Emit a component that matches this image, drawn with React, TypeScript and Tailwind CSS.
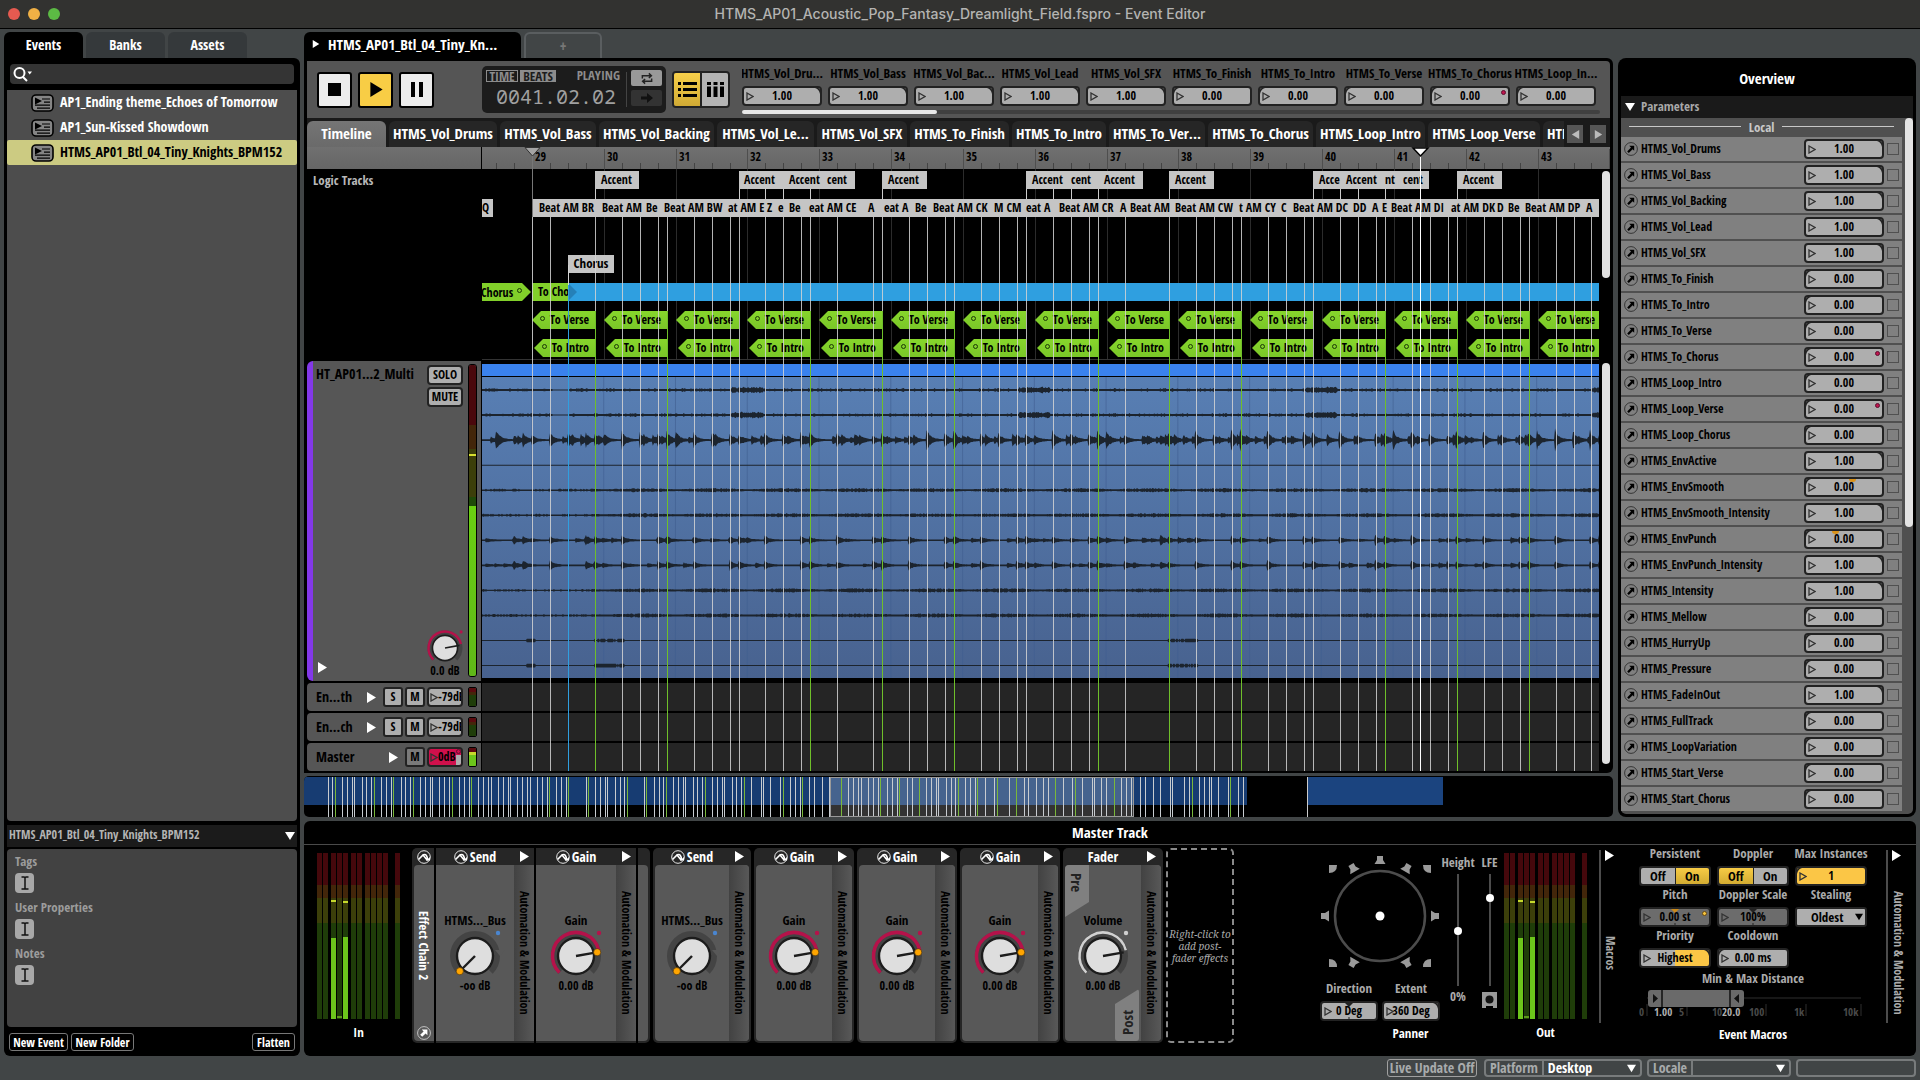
import type { ReactNode } from "react";

const BAR = 71.83;
const at = (bar: number) => 50 + BAR * bar;

const PARAMS: [string, string, string?][] = [
  ["HTMS_Vol_Drums", "1.00"], ["HTMS_Vol_Bass", "1.00"], ["HTMS_Vol_Backing", "1.00"], ["HTMS_Vol_Lead", "1.00"],
  ["HTMS_Vol_SFX", "1.00"], ["HTMS_To_Finish", "0.00"], ["HTMS_To_Intro", "0.00"], ["HTMS_To_Verse", "0.00"],
  ["HTMS_To_Chorus", "0.00", "red"], ["HTMS_Loop_Intro", "0.00"], ["HTMS_Loop_Verse", "0.00", "red"],
  ["HTMS_Loop_Chorus", "0.00"], ["HTMS_EnvActive", "1.00"], ["HTMS_EnvSmooth", "0.00", "mod"],
  ["HTMS_EnvSmooth_Intensity", "1.00"], ["HTMS_EnvPunch", "0.00", "modL"], ["HTMS_EnvPunch_Intensity", "1.00"],
  ["HTMS_Intensity", "1.00"], ["HTMS_Mellow", "0.00"], ["HTMS_HurryUp", "0.00"], ["HTMS_Pressure", "0.00"],
  ["HTMS_FadeInOut", "1.00"], ["HTMS_FullTrack", "0.00"], ["HTMS_LoopVariation", "0.00"],
  ["HTMS_Start_Verse", "0.00"], ["HTMS_Start_Chorus", "0.00"],
];

const TOP_PARAMS: [string, string, string?][] = [
  ["HTMS_Vol_Dru...", "1.00"], ["HTMS_Vol_Bass", "1.00"], ["HTMS_Vol_Bac...", "1.00"], ["HTMS_Vol_Lead", "1.00"],
  ["HTMS_Vol_SFX", "1.00"], ["HTMS_To_Finish", "0.00"], ["HTMS_To_Intro", "0.00"], ["HTMS_To_Verse", "0.00"],
  ["HTMS_To_Chorus", "0.00", "red"], ["HTMS_Loop_In...", "0.00"],
];

const SHEETS: [string, string][] = [
  ["HTMS_Vol_Drums", "w-[108px]"], ["HTMS_Vol_Bass", "w-[96px]"], ["HTMS_Vol_Backing", "w-[115px]"],
  ["HTMS_Vol_Le...", "w-[97px]"], ["HTMS_Vol_SFX", "w-[90px]"], ["HTMS_To_Finish", "w-[99px]"],
  ["HTMS_To_Intro", "w-[94px]"], ["HTMS_To_Ver...", "w-[96px]"], ["HTMS_To_Chorus", "w-[105px]"],
  ["HTMS_Loop_Intro", "w-[109px]"], ["HTMS_Loop_Verse", "w-[112px]"],
];

const BEATS = [
  0, 0.25, 0.875, 1.25, 1.5, 1.75, 1.875, 2.25, 2.5, 2.75, 2.875, 3.25, 3.5, 3.75, 3.875, 4.25, 4.75, 4.875,
  5.25, 5.5, 5.75, 5.875, 6.25, 6.5, 6.75, 6.875, 7.25, 7.5, 7.75, 7.875, 8.25, 8.875, 9.25, 9.5, 9.75, 9.875,
  10.25, 10.5, 10.75, 10.875, 11.25, 11.5, 11.75, 11.875, 12.25, 12.5, 12.75, 12.875, 13.25, 13.5, 13.75, 13.875,
  14.25, 14.5, 14.75,
];
const ACCENTS = [0.875, 2.875, 3.25, 3.5, 3.875, 4.875, 6.875, 7.25, 7.5, 7.875, 8.875, 10.875, 11.25, 11.5, 11.875, 12.875];

const BEAT_LABELS: [number, string][] = [
  [57, "Beat AM BR"], [120, "Beat AM"], [164, "Be"], [182, "Beat AM BW"], [246, "at AM E"], [285, "Z"], [296, "e"],
  [307, "Be"], [327, "eat AM CE"], [386, "A"], [402, "eat A"], [433, "Be"], [451, "Beat AM CK"], [512, "M CM"],
  [544, "eat A"], [577, "Beat AM CR"], [638, "A"], [648, "Beat AM"], [693, "Beat AM CW"], [757, "t AM CY"],
  [799, "C"], [811, "Beat AM DC"], [871, "DD"], [890, "A"], [900, "E"], [909, "Beat AM DI"], [969, "at AM DK"],
  [1015, "D"], [1026, "Be"], [1043, "Beat AM DP"], [1104, "A"],
];
const ACCENT_BOXES: [number, number][] = [[113, 44], [257, 116], [400, 45], [544, 117], [687, 45], [831, 116], [975, 45]];
const ACCENT_LABELS: [number, string][] = [
  [119, "Accent"], [262, "Accent"], [307, "Accent"], [345, "cent"], [406, "Accent"], [550, "Accent"], [589, "cent"],
  [622, "Accent"], [693, "Accent"], [837, "Acce"], [864, "Accent"], [903, "nt"], [921, "cent"], [981, "Accent"],
];

function Tri({ dir = "right", className = "" }: { dir?: "right" | "left" | "down"; className?: string }) {
  const d = dir === "right" ? "M1 0 L10 5.5 L1 11Z" : dir === "left" ? "M10 0 L1 5.5 L10 11Z" : "M0 1 L11 1 L5.5 10Z";
  return <svg viewBox="0 0 11 11" className={"shrink-0 fill-current " + className}><path d={d} /></svg>;
}

function Corner({ side }: { side: "l" | "r" }) {
  return (
    <svg viewBox="0 0 6 6" className={"absolute top-0 size-[6px] fill-[#222] " + (side === "r" ? "right-0" : "left-0")}>
      <path d={side === "r" ? "M1 0H6V6Q5 1 1 0Z" : "M5 0H0V6Q1 1 5 0Z"} />
    </svg>
  );
}

function Field({ label, value, mark, tone = "bg-[#aeaeae]", className = "w-20", centre = false }: {
  label: string; value: string; mark?: string; tone?: string; className?: string; centre?: boolean;
}) {
  const atStart = value === "0.00" || value === "1" || value === "0.00 ms";
  return (
    <span className={"relative flex h-5 shrink-0 items-center overflow-hidden rounded-[4px] border-2 border-[#222] text-black " + tone + " " + className}>
      {!centre && <Corner side={atStart ? "l" : "r"} />}
      {centre && (
        <svg viewBox="0 0 10 16" className="absolute inset-y-0 left-1/2 h-full w-[10px] -translate-x-1/2">
          <path d="M1 0H9L5 4Z" fill={mark === "pitch" ? "#c98a1c" : "#222"} /><path d="M5 14V16" stroke="#222" />
        </svg>
      )}
      <svg viewBox="0 0 8 9" className="absolute left-[2px] h-[9px] w-2"><path d="M1 1L7 4.5L1 8Z" fill="none" stroke="#333" strokeWidth="1.3" /></svg>
      <input aria-label={label} defaultValue={value} className="relative h-4 w-full bg-transparent text-center text-xs leading-4 font-bold outline-none" />
      {mark === "red" && <i className="absolute top-[2px] right-[2px] size-[5px] rounded-full border border-[#5c1030] bg-[#c0144c]" />}
      {mark === "mod" && <i className="absolute top-0 right-[26px] h-[3px] w-[7px] rounded-b-full bg-[#d9921a]" />}
      {mark === "modL" && <i className="absolute top-0 left-[26px] h-[3px] w-[7px] rounded-b-full bg-[#d9921a]" />}
      {mark === "pitch" && <i className="absolute top-[2px] right-[2px] size-[5px] rounded-full border border-[#6b4a10] bg-[#f8c63f]" />}
    </span>
  );
}

function polar(r: number, deg: number) {
  const a = (deg * Math.PI) / 180;
  return (30 + r * Math.cos(a)).toFixed(2) + " " + (30 + r * Math.sin(a)).toFixed(2);
}
const arc = (r: number, a: number, b: number) => "M" + polar(r, a) + "A" + r + " " + r + " 0 " + (b - a > 180 ? 1 : 0) + " 1 " + polar(r, b);

function Knob({ kind, className }: { kind: "send" | "gain" | "fader" | "track"; className: string }) {
  const angle = kind === "send" ? 135 : 350;
  return (
    <svg viewBox="0 0 60 60" className={"shrink-0 " + className}>
      <path d={arc(22, 135, 405)} fill="none" stroke="#444" strokeWidth="6" />
      {kind !== "send" && <path d={arc(23.5, 135, 346)} fill="none" stroke={kind === "fader" ? "#d0d0d0" : "#b5124a"} strokeWidth={kind === "fader" ? 2.5 : 3.5} />}
      {kind === "send" && <path d="M50 24L60 24L55 30Z" fill="#585858" />}
      <circle cx="30" cy="30" r="18" fill="#dedede" stroke="#1c1c1c" strokeWidth="2.4" />
      <path d={"M" + polar(0, angle) + "L" + polar(kind === "fader" || kind === "track" ? 21 : 18, angle)} stroke="#1c1c1c" strokeWidth="2.4" />
      {(kind === "gain" || kind === "send") && <circle cx={polar(21.5, angle).split(" ")[0]} cy={polar(21.5, angle).split(" ")[1]} r="3.6" fill="#ffa500" stroke="#3b2a10" strokeWidth="0.6" />}
      <circle cx="53" cy="7" r="2.2" fill={kind === "send" ? "#4a86d0" : kind === "fader" ? "#d0d0d0" : "#b5124a"} />
    </svg>
  );
}

function FxIcon() {
  return (
    <svg viewBox="0 0 14 14" className="size-[14px] shrink-0" fill="none" stroke="white">
      <circle cx="7" cy="7" r="6.3" strokeWidth="0.9" />
      <path d="M1.5 9.5L6 5L10.5 10.5M6 5C9 3.5 10.5 6 10.5 10" strokeWidth="1.6" /><path d="M9 10.5H13V7Z" fill="white" stroke="none" />
    </svg>
  );
}

function LinkIcon({ dark = false }: { dark?: boolean }) {
  return (
    <svg viewBox="0 0 14 14" className="size-[14px] shrink-0">
      <circle cx="7" cy="7" r="6.4" fill="none" stroke={dark ? "#222" : "#ddd"} strokeWidth="0.8" />
      <path d={dark ? "M5.2 3.8H10.2V8.8L8.6 7.2L4.8 11L3.2 9.4L7 5.4Z" : "M4.8 3.6H10.4V9.2L8.6 7.4L5.2 10.8L3.2 8.8L6.6 5.4Z"} fill={dark ? "#000" : "#fff"} />
    </svg>
  );
}

function EventIcon() {
  return (
    <svg viewBox="0 0 24 18" className="h-[18px] w-6 shrink-0">
      <rect x="1" y="1" width="21" height="16" rx="4" fill="#858585" stroke="#000" strokeWidth="1.6" />
      <path d="M4 3.5L11 7L4 10.5Z" /><path d="M11 5H19M13 8.2H19M4 11.2H19M6 14.2H19" stroke="#000" strokeWidth="1.2" />
    </svg>
  );
}

function Meters() {
  const bars = [0, 6, 14, 20, 26, 34, 40, 48, 54, 60, 66, 78];
  return (
    <svg viewBox="0 0 83 166" className="h-[166px] w-[83px]">
      {bars.map((x) => (
        <g key={x}>
          <rect x={x} y="0" width="5" height="32" fill="#45080c" />
          <rect x={x} y="32" width="5" height="13" fill="#43260a" />
          <rect x={x} y="45" width="5" height="25" fill="#3c3f0a" />
          <rect x={x} y="70" width="5" height="96" fill="#1f3d09" />
        </g>
      ))}
      <rect x="14" y="85" width="5" height="81" fill="#6cc51b" /><rect x="26" y="84" width="5" height="82" fill="#6cc51b" />
      <rect x="14" y="47" width="5" height="2" fill="#c5d92c" /><rect x="26" y="48" width="5" height="2" fill="#c5d92c" />
      <rect x="20" y="163" width="5" height="2" fill="#5d9a1c" />
    </svg>
  );
}

function MiniMeter({ lit = false }: { lit?: boolean }) {
  return (
    <span className="flex h-5 w-[9px] shrink-0 flex-col overflow-hidden rounded-[2px] border border-black">
      <i className="h-1 bg-[#5a0a0e]" />
      <i className={"h-[3px] " + (lit ? "bg-[#c5d92c]" : "bg-[#43260a]")} />
      <i className={"flex-1 " + (lit ? "bg-[#6cc51b]" : "bg-[#1f3d09]")} />
    </span>
  );
}

function rng(seed: number) {
  let s = seed;
  return () => ((s = (s * 16807) % 2147483647) / 2147483647);
}

/* Outline of one channel, mirrored around its centre line. */
function wave(cy: number, kind: number, seed: number) {
  const r = rng(seed * 7919 + 13);
  const top: string[] = [];
  const bottom: string[] = [];
  let env = 0;
  for (let x = 0; x <= 1118; x += 1) {
    const bar = (x - 50) / BAR;
    const part = ((bar % 1) + 1) % 1;
    let a = 0.5;
    if (kind === 0) {
      const swell = Math.abs(((bar + 12.1) % 4) - 3.1) < 0.22 && bar > 2;
      a = 1 + (r() > 0.75 ? r() : 0) + (swell ? 0.6 + r() * 1.4 : 0);
      if (x > 70 && x < 88) a = 0.5;
    }
    if (kind === 1) {
      const hit = [0.875, 0, 0.25, 0.5, 0.75].some((p) => Math.abs(part - p) < 0.007);
      if (hit) env = 5 + r() * 7;
      else if (x % 9 === 0 && r() > 0.5) env = 3 + r() * 4;
      env *= 0.78;
      a = 0.8 + env * (0.7 + r() * 0.5);
    }
    if (kind === 2) {
      const hit = [0.875, 0.25, 0.75].some((p) => Math.abs(part - p) < 0.007);
      if (hit) env = 4 + r() * 2;
      else if (x % 9 === 4 && r() > 0.65) env = 1.5 + r() * 2;
      env *= 0.8;
      a = 0.8 + env * (0.6 + r() * 0.5);
    }
    if (kind === 3) a = x < 110 ? (r() > 0.7 ? 1.4 : 0.7) : 0.9 + r() * 1.3 * Math.abs(Math.sin(bar * 3.1));
    if (kind === 4) {
      const b = (x - 113 + 574) % 574;
      a = (b < 30 && r() > 0.2) || (x > 44 && x < 54) ? 1.8 : 0.5;
    }
    top.push(x + " " + (cy - a).toFixed(1));
    bottom.push(x + " " + (cy + a).toFixed(1));
  }
  return "M" + top.join("L") + "L" + bottom.reverse().join("L") + "Z";
}
const ROWS = [0, 0, 1, 5, 3, 3, 2, 2, 3, 3, 4, 4];
const WAVES = ROWS.map((k, i) => wave(13 + i * 25.05, k, i + 3));

function Lane({ children }: { children?: ReactNode }) {
  return <div className="relative h-[18px] overflow-hidden">{children}</div>;
}

function Transition({ bar, text, inset }: { bar: number; text: string; inset: number }) {
  const left = Math.round(at(bar)) + inset;
  return (
    <div className="absolute top-0 flex h-[18px] items-center justify-between bg-gradient-to-b from-[#87d62c] to-[#7ac728] pr-1.5 pl-2 text-xs leading-[18px] text-black [clip-path:polygon(0_50%,9px_0,100%_0,100%_100%,9px_100%)]"
      style={{ left, width: 63 - inset }}>
      <span className="mb-1 size-[5px] rounded-full border border-[#1c3a06]" />{text}
    </div>
  );
}

function Volume({ label, hot = false }: { label: string; hot?: boolean }) {
  return (
    <span className={"relative flex h-5 w-9 shrink-0 items-center overflow-hidden rounded-[4px] border-2 border-[#222] " + (hot ? "bg-[#d0104c]" : "bg-[#aeaeae]")}>
      {hot && <i className="absolute right-0 bottom-0 h-2.5 w-[5px] bg-[#aeaeae]" />}
      <svg viewBox="0 0 8 9" className="ml-px h-[9px] w-2 shrink-0"><path d="M1 1L7 4.5L1 8Z" fill="none" stroke="#333" strokeWidth="1.3" /></svg>
      <input aria-label={label + " volume"} defaultValue={hot ? "0dB" : "-79dB"} className="relative h-4 w-8 min-w-0 bg-transparent text-xs leading-4 font-bold text-black outline-none" />
      {hot && <i className="absolute top-0 right-0 size-[5px] rounded-full border border-[#5c1030]" />}
    </span>
  );
}

function SmallRow({ name, solo, hot }: { name: string; solo: boolean; hot?: boolean }) {
  return (
    <div className="flex h-7">
      <div className="flex w-[174px] shrink-0 items-center rounded-l-[4px] bg-[#565656] pr-1 pl-[9px]">
        <span className="flex-1 text-sm text-black">{name}</span>
        <button aria-label={"Expand " + name} className="mr-1.5 text-white"><Tri className="size-[11px]" /></button>
        {solo && <button className="mr-0.5 h-5 w-5 rounded-[3px] border-2 border-[#222] bg-[#aeaeae] text-xs leading-4">S</button>}
        <button className={"mr-0.5 h-5 w-5 rounded-[3px] border-2 border-[#222] text-xs leading-4 " + (solo ? "bg-[#aeaeae]" : "bg-[#7a7a7a]")}>M</button>
        <Volume label={name} hot={hot} />
        <span className="w-[5px]" />
        <MiniMeter lit={hot} />
      </div>
      <div className="mr-[11px] ml-px flex-1 bg-[#252525]" />
    </div>
  );
}

function Strip() {
  return <div className="flex w-5 shrink-0 items-center justify-center bg-gradient-to-r from-[#424242] to-[#585858] text-xs leading-5 text-black [writing-mode:vertical-rl]">Automation &amp; Modulation</div>;
}

function Dial({ kind, label, value }: { kind: "send" | "gain" | "fader"; label: string; value: string }) {
  return (
    <>
      <span className="h-5 text-[13px] leading-[18px] text-black">{label}</span>
      <Knob kind={kind} className="-mt-[5px] -mb-2 size-[60px]" />
      <span className="text-xs leading-4 text-black">{value}</span>
    </>
  );
}

function Card({ title, kind, label, value, width, chained = false }: { title: string; kind: "send" | "gain"; label: string; value: string; width: string; chained?: boolean }) {
  return (
    <div className={"flex shrink-0 flex-col overflow-hidden bg-[#262626] " + width + (chained ? " pb-0.5" : " rounded-[5px] px-0.5 pb-0.5")}>
      <div className="flex h-[17px] shrink-0 items-center text-sm leading-4 text-white">
        <span className="flex flex-1 items-center justify-center gap-0.5"><FxIcon />{title}</span>
        <button aria-label={"Expand " + title} className="flex w-5 justify-center"><Tri className="size-[11px]" /></button>
      </div>
      <div className={"flex min-h-0 flex-1 overflow-hidden bg-[#585858] " + (chained ? "" : "rounded-[4px]")}>
        <div className="flex flex-1 flex-col items-center pt-[46px]"><Dial kind={kind} label={label} value={value} /></div>
        <Strip />
      </div>
    </div>
  );
}

function Speaker({ x, y, turn, corner = false }: { x: number; y: number; turn: number; corner?: boolean }) {
  return (
    <g transform={"translate(" + x + " " + y + ") rotate(" + turn + ")"} fill="#9a9a9a">
      {corner ? <path d="M-4 4V-4H4Q4 4 -4 4Z" /> : <path d="M-3 -4H3V0L5.5 4H-5.5L-3 0Z" />}
    </g>
  );
}

function Toggle({ on, label }: { on: boolean; label: string }) {
  const lit = "bg-gradient-to-b from-[#f7cb45] to-[#d3ac32]";
  return (
    <div role="group" aria-label={label} className="flex h-5 w-[72px] gap-px rounded-[3px] border-2 border-[#222] bg-[#222] text-[13px] leading-4 text-black">
      <button className={"flex-1 rounded-l-[2px] " + (on ? "bg-[#aeaeae]" : lit)}>Off</button>
      <button className={"flex-1 rounded-r-[2px] " + (on ? lit : "bg-[#aeaeae]")}>On</button>
    </div>
  );
}

function Cell({ label, children }: { label: string; children: ReactNode }) {
  return <div className="flex flex-col items-center"><span className="h-[21px] text-[13px] leading-4 whitespace-nowrap text-[#ababab]">{label}</span>{children}</div>;
}

function Slider({ label, top, children }: { label: string; top: string; children: ReactNode }) {
  return (
    <>
      <span className="leading-6">{label}</span>
      <span className="relative h-[112px] w-0.5 bg-[#4c4c4c]">
        <input type="range" aria-label={label} className="absolute inset-y-0 -left-1 w-2.5 opacity-0 [writing-mode:vertical-lr]" />
        <i className={"pointer-events-none absolute -left-[3px] size-2 rounded-full bg-white " + top} />
      </span>
      {children}
    </>
  );
}

const MINI_BAR = 19.47;
const MINI: { x: number; green: boolean }[] = [];
{
  const r = rng(4711);
  for (let bar = -27; bar < 21; bar += 1) {
    for (const part of [0.25, 0.5, 0.75, 0.875]) {
      const x = Math.round(539.5 + (bar + part) * MINI_BAR);
      if (x > 15 && x < 943 && (part === 0.875 || r() > 0.16)) MINI.push({ x, green: part === 0.875 && r() > 0.4 });
    }
  }
}

export default function App() {
  return (
    <div className="flex min-h-screen flex-col overflow-hidden bg-[#414546] font-['Open_Sans_Condensed','Open_Sans',sans-serif] text-[13px] font-bold text-black select-none">
      <header className="flex h-[29px] shrink-0 items-center border-b border-black bg-[#323230] px-2">
        <div className="flex w-[54px] gap-2">
          <button aria-label="Close" className="size-3 rounded-full bg-[#e65a50]" />
          <button aria-label="Minimise" className="size-3 rounded-full bg-[#f0b045]" />
          <button aria-label="Zoom" className="size-3 rounded-full bg-[#5cba44]" />
        </div>
        <h1 className="flex-1 pr-[54px] text-center font-['Inter',sans-serif] text-sm leading-5 font-medium text-[#b4b4b2]">HTMS_AP01_Acoustic_Pop_Fantasy_Dreamlight_Field.fspro - Event Editor</h1>
      </header>

      <main className="grid flex-1 grid-cols-[296px_minmax(0,1fr)] gap-x-1 px-1 pt-[3px]">
        <aside className="flex flex-col">
          <nav className="flex h-[26px] gap-[3px] text-sm leading-4 text-white">
            <button className="w-[79px] rounded-t-[6px] bg-black">Events</button>
            <button className="w-[79px] rounded-t-[6px] bg-[#35393b]">Banks</button>
            <button className="w-[79px] rounded-t-[6px] bg-[#35393b]">Assets</button>
          </nav>
          <div className="flex flex-1 flex-col rounded-[6px] rounded-tl-none bg-black px-[3px] pt-1.5 pb-[5px]">
            <div className="mx-[3px] flex h-5 items-center rounded-[4px] bg-[#343434] pl-[3px]">
              <svg viewBox="0 0 20 16" className="h-4 w-5 shrink-0" fill="none" stroke="white" strokeWidth="2">
                <circle cx="6.5" cy="7" r="5" /><path d="M10 11L14 15" /><path d="M14.5 5.5H19L16.7 8.5Z" fill="white" stroke="none" />
              </svg>
              <input aria-label="Search events" className="min-w-0 flex-1 bg-transparent text-white outline-none" />
            </div>
            <ul className="mt-1.5 flex-1 rounded-b-[4px] bg-[#4d4d4d] text-sm leading-5 text-white">
              {["AP1_Ending theme_Echoes of Tomorrow", "AP1_Sun-Kissed Showdown", "HTMS_AP01_Btl_04_Tiny_Knights_BPM152"].map((t, i) => (
                <li key={t} className={"flex h-[25px] items-center gap-[5px] pl-6 whitespace-nowrap " + (i === 2 ? "rounded-[2px] bg-[#cccb82] text-black" : "")}><EventIcon /><span className="pb-0.5">{t}</span></li>
              ))}
            </ul>
            <div className="mt-1 flex h-[22px] items-center justify-between bg-[#1b1b1b] px-0.5 text-[13px] leading-5 text-[#b4b4b4]">
              <span className="pb-0.5 text-xs">HTMS_AP01_Btl_04_Tiny_Knights_BPM152</span>
              <button aria-label="Collapse properties" className="text-white"><Tri dir="down" className="size-[10px]" /></button>
            </div>
            <div className="mt-0.5 flex h-[178px] flex-col rounded-[4px] bg-[#424242] pt-[3px] pl-2 text-[13px] text-[#9c9c9c]">
              {["Tags", "User Properties", "Notes"].map((t) => (
                <div key={t} className="h-[46px]">
                  <div className="h-[21px] leading-[18px]">{t}</div>
                  <button aria-label={"Edit " + t} className="flex h-5 w-[19px] items-center justify-center rounded-[4px] bg-[#a8a8a8]">
                    <svg viewBox="0 0 10 14" className="h-[14px] w-[10px]" fill="none" stroke="#111" strokeWidth="1.5"><path d="M1.5 1H4Q5 1 5 2Q5 1 6 1H8.5M5 2V12M1.5 13H4Q5 13 5 12Q5 13 6 13H8.5" /></svg>
                  </button>
                </div>
              ))}
            </div>
            <div className="mt-1.5 flex h-[18px] gap-[3px] px-0.5 text-xs leading-[15px] text-white">
              <button className="w-[59px] rounded-[3px] border border-[#777]">New Event</button>
              <button className="w-[63px] rounded-[3px] border border-[#777]">New Folder</button>
              <button className="ml-auto w-[43px] rounded-[3px] border border-[#777]">Flatten</button>
            </div>
          </div>
        </aside>

        <div className="flex min-w-0 flex-col gap-1">
          <div className="grid flex-1 grid-cols-[minmax(0,1fr)_298px] gap-x-[5px]">
            <section className="flex min-w-0 flex-col">
              <nav className="flex h-[26px] gap-[3px] text-[15px] leading-5 text-white">
                <button className="flex w-[217px] items-center gap-2 rounded-t-[6px] bg-black pb-0.5 pl-2"><Tri className="size-2" />HTMS_AP01_Btl_04_Tiny_Kn...</button>
                <button className="w-[78px] rounded-t-[6px] border-2 border-b-0 border-[#5a5e60] text-base leading-6 text-[#777]">+</button>
              </nav>
              <div className="flex flex-1 flex-col rounded-r-[6px] bg-black px-[3px] pt-[3px] pb-0.5">
                <div className="flex h-[57px] shrink-0 items-center rounded-tr-[4px] bg-[#555]">
                  <div className="ml-[10px] flex gap-[6px]">
                    <button aria-label="Stop" className="flex h-9 w-[35px] items-center justify-center rounded-[3px] border-2 border-black bg-[#ececec]"><i className="size-[13px] bg-black" /></button>
                    <button aria-label="Play" className="flex h-9 w-[35px] items-center justify-center rounded-[3px] border-2 border-black bg-[#f8cd45]"><Tri className="ml-0.5 size-[15px]" /></button>
                    <button aria-label="Pause" className="flex h-9 w-[35px] items-center justify-center gap-1 rounded-[3px] border-2 border-black bg-[#ececec]"><i className="h-[15px] w-1 bg-black" /><i className="h-[15px] w-1 bg-black" /></button>
                  </div>
                  <div className="ml-12 flex h-[47px] w-[184px] rounded-[5px] bg-[#1c1c1c] p-1">
                    <div className="flex flex-1 flex-col">
                      <div className="flex h-3 items-center text-[13px] leading-[9px] text-[#8c8c8c]">
                        <button className="h-3 w-8 border border-[#8c8c8c]">TIME</button>
                        <button className="ml-0.5 h-3 w-9 bg-[#8c8c8c] text-[#1c1c1c]">BEATS</button>
                        <span className="ml-auto pr-1.5 pb-0.5">PLAYING</span>
                      </div>
                      <div className="mt-[3px] text-center font-['Noto_Sans_Mono',monospace] text-xl leading-6 font-normal text-[#a0a0a0]">0041.02.02</div>
                    </div>
                    <div className="my-0.5 mr-1 w-px bg-[#444]" />
                    <div className="flex w-[31px] flex-col gap-1">
                      <button aria-label="Loop playback" className="flex h-4 items-center justify-center rounded-[2px] bg-[#999]">
                        <svg viewBox="0 0 16 14" className="h-[13px] w-4" fill="none" stroke="#222" strokeWidth="1.6"><path d="M3 7V4H12M10 1.5L12.7 4L10 6.5M13 7V10H4M6 7.5L3.3 10L6 12.5" /></svg>
                      </button>
                      <button aria-label="Follow" className="flex h-4 items-center justify-center rounded-[2px] bg-[#333]">
                        <svg viewBox="0 0 14 10" className="h-[10px] w-[14px] fill-[#111]"><path d="M1 3.5H7V0L13 5L7 10V6.5H1Z" /></svg>
                      </button>
                    </div>
                  </div>
                  <div className="ml-1.5 flex h-[37px] w-[58px] overflow-hidden rounded-[4px] border-2 border-[#222]">
                    <button aria-label="List view" className="flex flex-1 items-center justify-center bg-gradient-to-b from-[#f8d04a] to-[#d0aa34]">
                      <svg viewBox="0 0 19 15" className="h-[15px] w-[19px]"><path d="M0 0h3v3H0zM5 0h14v3H5zM0 6h3v3H0zM5 6h14v3H5zM0 12h3v3H0zM5 12h14v3H5z" /></svg>
                    </button>
                    <button aria-label="Column view" className="flex flex-1 items-center justify-center border-l-2 border-[#222] bg-[#b4b4b4]">
                      <svg viewBox="0 0 17 15" className="h-[15px] w-[17px]"><path d="M0 0h4v3H0zM6.5 0h4v3h-4zM13 0h4v3h-4zM0 4.5h4v10.5H0zM6.5 4.5h4v10.5h-4zM13 4.5h4v10.5h-4z" /></svg>
                    </button>
                  </div>
                  <div className="ml-3 flex min-w-0 flex-1 flex-col pr-2.5">
                    <div className="flex gap-[6px] overflow-hidden">
                      {TOP_PARAMS.map(([n, v, m]) => (
                        <label key={n} className="flex w-20 shrink-0 flex-col items-center text-[13px] leading-4 whitespace-nowrap text-black">{n}<span className="h-[5px]" /><Field label={n} value={v} mark={m} /></label>
                      ))}
                    </div>
                    <div className="mt-1 h-1 rounded-full bg-[#404040]"><div className="h-1 w-[195px] rounded-full bg-[#e8e8e8]" /></div>
                  </div>
                </div>

                <nav className="flex h-[29px] shrink-0 items-end overflow-hidden bg-[#1a1a1a] text-[15px] leading-5 whitespace-nowrap text-white">
                  <button className="mr-[3px] h-[26px] w-[79px] shrink-0 rounded-t-[6px] bg-gradient-to-b from-[#757575] to-[#6a6a6a] pb-0.5">Timeline</button>
                  {SHEETS.map(([t, w]) => <button key={t} className={"mr-[3px] h-[26px] shrink-0 rounded-t-[6px] bg-[#262626] pb-0.5 " + w}>{t}</button>)}
                  <button className="h-[26px] w-[21px] shrink-0 overflow-hidden rounded-tl-[6px] bg-[#262626] pb-0.5 pl-1 text-left">HTMS</button>
                  <span className="mb-1 ml-auto flex gap-[7px] pr-1 text-[#bbb]">
                    <button aria-label="Previous sheet" className="flex h-[18px] w-4 items-center justify-center bg-[#555]"><Tri dir="left" className="size-[9px]" /></button>
                    <button aria-label="Next sheet" className="flex h-[18px] w-4 items-center justify-center bg-[#555]"><Tri className="size-[9px]" /></button>
                  </span>
                </nav>

                <div className="relative flex flex-1 flex-col overflow-hidden">
                  <div className="flex h-[22px] shrink-0 bg-gradient-to-b from-[#707070] to-[#666]">
                    <div className="w-[175px] shrink-0 border-r border-black" />
                    <div className="relative flex-1 overflow-hidden text-xs leading-5">
                      <svg className="absolute inset-0 h-full w-full" shapeRendering="crispEdges">
                        {Array.from({ length: 64 }, (_, i) => {
                          const x = Math.round(at(i / 4 - 0.5));
                          return (i - 2) % 4 === 0 ? <path key={i} d={"M" + x + ".5 2V22"} stroke="#4e4e4e" /> : <path key={i} d={"M" + x + ".5 16V22"} stroke="#444" />;
                        })}
                      </svg>
                      {Array.from({ length: 15 }, (_, i) => <span key={i} className="absolute top-0" style={{ left: Math.round(at(i)) + 3 }}>{29 + i}</span>)}
                    </div>
                  </div>

                  <div className="flex h-[191px] shrink-0">
                    <div className="w-[175px] shrink-0 pt-px pl-1.5 text-[13px] leading-5 text-[#b8b8b8]">Logic Tracks</div>
                    <div className="relative mr-[11px] flex-1 overflow-hidden border-b border-[#333] pt-0.5 text-xs leading-[17px] whitespace-nowrap">
                      <svg className="absolute inset-0 h-full w-full" shapeRendering="crispEdges">
                        {Array.from({ length: 15 }, (_, i) => <path key={i} d={"M" + Math.round(at(i)) + ".5 0V191"} stroke="#2b2b2b" />)}
                        {ACCENTS.map((b) => <path key={b} d={"M" + Math.round(at(b)) + ".5 20V32"} stroke="#ccc" />)}
                      </svg>
                      <Lane>
                        {ACCENT_BOXES.map(([x, w]) => <i key={x} className="absolute top-0 h-[18px] bg-[#c5c5c5]" style={{ left: x, width: w }} />)}
                        {ACCENT_LABELS.map(([x, t]) => <span key={x} className="absolute top-0" style={{ left: x }}>{t}</span>)}
                      </Lane>
                      <div className="h-2.5" />
                      <Lane>
                        <i className="absolute top-0 left-0 h-[18px] w-[11px] bg-[#c5c5c5]" /><span className="absolute top-0 left-0">Q</span>
                        <i className="absolute top-0 right-0 left-[50px] h-[18px] bg-[#c5c5c5]" />
                        {BEAT_LABELS.map(([x, t]) => <span key={x} className="absolute top-0" style={{ left: x }}>{t}</span>)}
                      </Lane>
                      <div className="h-[38px]" />
                      <Lane><span className="absolute left-[86px] h-[18px] w-[46px] bg-[#c5c5c5] text-center text-[13px]">Chorus</span></Lane>
                      <div className="h-2.5" />
                      <Lane>
                        <div className="absolute left-0 flex h-[18px] w-[50px] items-center bg-[#82d02a] [clip-path:polygon(0_0,40px_0,49px_50%,40px_100%,0_100%)]"><span className="-ml-px">Chorus</span><span className="mb-1 ml-1 size-[5px] rounded-full border border-[#1c3a06]" /></div>
                        <div className="absolute left-[50px] h-[18px] w-9 overflow-hidden bg-[#82d02a] pl-1.5">To Cho</div>
                        <div className="absolute right-0 left-[86px] h-[18px] bg-[#2f9fe0]" />
                        <div className="absolute left-[86px] h-[18px] w-[9px] bg-[#2580b8] [clip-path:polygon(0_0,100%_50%,0_100%)]" />
                      </Lane>
                      <div className="h-2.5" />
                      <Lane>{Array.from({ length: 15 }, (_, i) => <Transition key={i} bar={i} text="To Verse" inset={0} />)}</Lane>
                      <div className="h-2.5" />
                      <Lane>{Array.from({ length: 15 }, (_, i) => <Transition key={i} bar={i} text="To Intro" inset={2} />)}</Lane>
                    </div>
                  </div>

                  <div className="flex flex-1 pt-px">
                    <div className="flex w-[174px] shrink-0 rounded-l-[6px] border-l-[6px] border-[#8338e8] bg-[#565656] pt-[3px] pr-1 pb-0.5 pl-[3px]">
                      <div className="flex flex-1 flex-col justify-between text-sm">
                        HT_AP01...2_Multi
                        <button aria-label="Expand HT_AP01" className="mb-1.5 ml-px text-white"><Tri className="size-[11px]" /></button>
                      </div>
                      <div className="flex w-9 flex-col items-center pt-px">
                        <button className="mb-0.5 h-5 w-9 rounded-[4px] border-2 border-[#222] bg-[#aeaeae] text-xs leading-4">SOLO</button>
                        <button className="h-5 w-9 rounded-[4px] border-2 border-[#222] bg-[#aeaeae] text-xs leading-4">MUTE</button>
                        <span className="flex-1" />
                        <Knob kind="track" className="-mb-[6px] size-[42px]" />
                        <span className="text-xs leading-4">0.0 dB</span>
                      </div>
                      <div className="mb-0.5 ml-[5px] flex w-[9px] flex-col overflow-hidden rounded-[3px] border border-black">
                        <i className="h-[60px] bg-[#4a080c]" /><i className="h-6 bg-[#43260a]" /><i className="h-[5px] bg-[#3c3f0a]" />
                        <i className="h-0.5 bg-[#d6e030]" /><i className="h-[41px] bg-[#3c3f0a]" /><i className="h-[9px] bg-[#1f4a09]" />
                        <i className="flex-1 bg-gradient-to-b from-[#6ad012] to-[#60b818]" />
                      </div>
                    </div>
                    <div className="mr-[11px] ml-px flex flex-1 flex-col overflow-hidden bg-black py-[3px]">
                      <div className="h-3 shrink-0 bg-[#3a82ee]" />
                      <svg viewBox="0 0 1118 301" preserveAspectRatio="none" className="mt-px h-0 min-h-[296px] w-full flex-1">
                        <defs><linearGradient id="clip" x1="0" y1="0" x2="0" y2="1"><stop offset="0" stopColor="#587fb4" /><stop offset="1" stopColor="#48628f" /></linearGradient></defs>
                        <rect width="1118" height="301" fill="url(#clip)" />
                        {Array.from({ length: 15 }, (_, i) => <path key={i} d={"M" + at(i) + " 0V301"} stroke="#3f5e90" strokeOpacity="0.6" />)}
                        {WAVES.map((d, i) => <path key={i} d={d} fill="#1c242e" />)}
                      </svg>
                    </div>
                  </div>
                  <div className="mt-0.5 flex flex-col gap-0.5">
                    <SmallRow name="En...th" solo />
                    <SmallRow name="En...ch" solo />
                    <SmallRow name="Master" solo={false} hot />
                  </div>

                  <svg className="pointer-events-none absolute right-[11px] bottom-0 left-[175px] h-[calc(100%-70px)] w-[calc(100%-186px)]" shapeRendering="crispEdges">
                    {BEATS.map((b) => <path key={b} d={"M" + Math.round(at(b)) + ".5 0V900"} stroke="#d4d4d4" strokeOpacity="0.85" />)}
                    {Array.from({ length: 15 }, (_, i) => i).filter((i) => ![2, 6, 10].includes(i)).map((i) => <path key={i} d={"M" + Math.round(at(i + 0.875)) + ".5 94V900"} stroke="#6fbf2a" />)}
                    <path d="M86.5 48V68" stroke="#d4d4d4" /><path d="M86.5 68V900" stroke="#2f9fe0" />
                  </svg>
                  <svg className="pointer-events-none absolute inset-y-0 left-[175px] h-full w-[calc(100%-186px)]">
                    <path d="M50.5 8V70" stroke="#777" /><path d="M43 0.5H58L50.5 9Z" fill="#a4a4a4" stroke="#333" />
                    <path d="M938.5 8V900" stroke="#fff" /><path d="M931 1H946L938.5 9Z" fill="#fff" stroke="#000" strokeWidth="1.5" />
                  </svg>
                  <i className="absolute top-[24px] right-0 h-[107px] w-2 rounded-full bg-[#e0e0e0]" />
                  <i className="absolute top-[216px] right-0 bottom-[7px] w-2 rounded-full bg-[#e0e0e0]" />
                </div>
              </div>

              <div className="mt-[3px] h-[41px] shrink-0 overflow-hidden rounded-[5px] bg-black">
                <svg className="h-full w-full" shapeRendering="crispEdges">
                  <rect x="0" y="1" width="943" height="28" fill="#173c72" />
                  <rect x="526" y="1" width="303" height="40" fill="#fff" fillOpacity="0.2" />
                  {MINI.map((m) => <path key={m.x} d={"M" + m.x + ".5 1V41"} stroke={m.green ? "#7ab83a" : "#c8ccd0"} />)}
                  <rect x="526" y="1" width="303" height="39" fill="none" stroke="#999" />
                  <rect x="1003" y="1" width="136" height="28" fill="#1b447f" /><path d="M1003.5 1V41" stroke="#ccc" />
                </svg>
              </div>
            </section>

            <aside className="mt-[26px] flex flex-col overflow-hidden rounded-[8px] bg-black p-[3px]">
              <h2 className="h-[35px] text-center text-[15px] leading-[34px] text-white">Overview</h2>
              <div className="flex h-[22px] items-center gap-1.5 bg-[#1a1a1a] pl-1 text-[13px] leading-5 text-[#a8a8a8]"><button aria-label="Collapse parameters" className="text-white"><Tri dir="down" className="size-[10px]" /></button><span className="pb-0.5">Parameters</span></div>
              <div className="flex flex-1 rounded-b-[5px] bg-[#505050]">
                <div className="flex-1">
                  <div className="flex h-[19px] items-center gap-2 px-2 pb-0.5 text-[13px] leading-4 text-[#c8c8c8]"><i className="h-px flex-1 bg-[#c8c8c8]" />Local<i className="h-px flex-1 bg-[#c8c8c8]" /></div>
                  <ul className="flex flex-col gap-0.5">
                    {PARAMS.map(([n, v, m]) => (
                      <li key={n} className="flex h-6 items-center bg-[#808080] px-[3px] text-xs leading-4">
                        <LinkIcon dark />
                        <span className="ml-[3px] flex-1">{n}</span>
                        <Field label={n} value={v} mark={m} />
                        <input type="checkbox" aria-label={"Hold " + n} className="ml-[3px] size-3 appearance-none border border-[#505050]" />
                      </li>
                    ))}
                  </ul>
                </div>
                <div className="w-[11px] shrink-0 pl-[3px]"><i className="block h-[409px] w-2 rounded-full bg-[#e4e4e4]" /></div>
              </div>
            </aside>
          </div>

          <section className="flex h-[235px] shrink-0 flex-col rounded-[6px] bg-black">
            <h2 className="h-6 shrink-0 border-b border-[#4a4a4a] text-center text-[15px] leading-[22px] text-white">Master Track</h2>
            <div className="flex min-h-0 flex-1">
              <div className="ml-[13px] flex w-[83px] shrink-0 flex-col items-center gap-[3px] pt-2 text-[13px] leading-5 text-white"><Meters />In</div>
              <div className="mt-[3px] ml-3 flex h-[195px] flex-1">
                <div className="flex w-[238px] shrink-0 overflow-hidden rounded-[5px] bg-[#262626]">
                  <div className="flex w-[22px] shrink-0 flex-col items-center pb-0.5 pl-0.5 text-white">
                    <div className="flex h-[17px] shrink-0 items-center"><FxIcon /></div>
                    <div className="flex w-5 flex-1 flex-col items-center rounded-l-[4px] bg-[#585858] pb-px">
                      <span className="flex flex-1 items-center justify-center text-[13px] leading-5 [writing-mode:vertical-rl]">Effect Chain 2</span>
                      <LinkIcon />
                    </div>
                  </div>
                  <Card chained title="Send" kind="send" label="HTMS..._Bus" value="-oo dB" width="w-[100px] border-l-2 border-black" />
                  <Card chained title="Gain" kind="gain" label="Gain" value="0.00 dB" width="w-[104px] border-x-2 border-black" />
                  <div className="mt-[17px] mr-0.5 mb-0.5 flex-1 rounded-r-[4px] bg-[#585858]" />
                </div>
                <div className="ml-[3px] flex gap-[3px]">
                  <Card title="Send" kind="send" label="HTMS..._Bus" value="-oo dB" width="w-[98px]" />
                  <Card title="Gain" kind="gain" label="Gain" value="0.00 dB" width="w-[100px]" />
                  <Card title="Gain" kind="gain" label="Gain" value="0.00 dB" width="w-[100px]" />
                  <Card title="Gain" kind="gain" label="Gain" value="0.00 dB" width="w-[100px]" />
                  <div className="flex w-[100px] flex-col overflow-hidden rounded-[5px] bg-[#262626] px-0.5 pb-0.5">
                    <div className="flex h-[17px] items-center text-sm leading-4 text-white"><span className="flex-1 text-center">Fader</span><button aria-label="Expand Fader" className="flex w-5 justify-center"><Tri className="size-[11px]" /></button></div>
                    <div className="flex flex-1 overflow-hidden rounded-[4px] bg-[#585858]">
                      <div className="relative flex flex-1 flex-col items-center pt-[46px] text-black">
                        <span className="absolute top-0 left-0 h-[52px] w-6 bg-[#808080] pt-2 text-[15px] leading-6 text-[#222] [clip-path:polygon(0_0,100%_0,100%_37px,0_100%)] [writing-mode:vertical-rl]">Pre</span>
                        <Dial kind="fader" label="Volume" value="0.00 dB" />
                        <span className="absolute right-0.5 bottom-0 h-[52px] w-6 rotate-180 rounded-[3px] bg-[#808080] pt-1.5 text-[15px] leading-6 text-[#222] [clip-path:polygon(0_0,100%_0,100%_37px,0_100%)] [writing-mode:vertical-rl]">Post</span>
                      </div>
                      <Strip />
                    </div>
                  </div>
                  <div className="flex w-[68px] items-center justify-center rounded-[5px] border-2 border-dashed border-[#8a8a8a] text-center font-['Noto_Serif','Liberation_Serif',serif] text-[10px] leading-3 font-normal text-[#a8a8a8] italic">Right-click to<br />add post-<br />fader effects</div>
                </div>
              </div>

              <div className="flex shrink-0 pt-[5px]">
                <div className="flex flex-col items-center">
                  <svg viewBox="0 0 120 124" className="mt-0.5 h-[124px] w-[120px]">
                    <circle cx="60" cy="64" r="45" fill="none" stroke="#4c4c4c" strokeWidth="2.5" />
                    <circle cx="60" cy="64" r="4.5" fill="#fff" />
                    <Speaker x={60} y={8} turn={0} /><Speaker x={33} y={16} turn={-30} /><Speaker x={87} y={16} turn={30} />
                    <Speaker x={5} y={64} turn={-90} /><Speaker x={115} y={64} turn={90} />
                    <Speaker x={33} y={111} turn={-150} /><Speaker x={87} y={111} turn={150} />
                    <Speaker corner x={13} y={17} turn={0} /><Speaker corner x={107} y={17} turn={90} />
                    <Speaker corner x={107} y={111} turn={180} /><Speaker corner x={13} y={111} turn={270} />
                  </svg>
                  <div className="mt-1 flex gap-1 text-[13px]">
                    <Cell label="Direction"><Field label="Direction" value="0 Deg" centre className="w-[58px]" /></Cell>
                    <Cell label="Extent"><Field label="Extent" value="360 Deg" className="w-[58px]" /></Cell>
                  </div>
                  <span className="mt-1 pl-[61px] text-[13px] leading-4 text-white">Panner</span>
                </div>
                <div className="flex w-9 flex-col items-center text-[13px] leading-5 text-[#ababab]">
                  <Slider label="Height" top="top-[53px]"><span>0%</span></Slider>
                </div>
                <div className="flex w-[27px] flex-col items-center text-[13px] leading-5 text-[#ababab]">
                  <Slider label="LFE" top="top-[20px]">
                    <svg viewBox="0 0 15 16" className="mt-1.5 h-4 w-[15px]"><path d="M0 0H15V16H11V14H4V16H0Z" fill="#999" /><circle cx="7.5" cy="7.5" r="4" fill="#111" /></svg>
                  </Slider>
                </div>
              </div>
              <div className="ml-px flex w-[83px] shrink-0 flex-col items-center gap-[3px] pt-2 text-[13px] leading-5 text-white"><Meters />Out</div>
              <div className="mt-[5px] ml-3 flex h-[173px] w-[27px] shrink-0 flex-col border-l-2 border-[#4c4c4c] pl-[3px] text-white">
                <button aria-label="Expand macros"><Tri className="size-[11px]" /></button>
                <span className="mt-[75px] w-[12px] text-xs leading-3 text-[#ababab] [writing-mode:vertical-rl]">Macros</span>
              </div>
              <div className="ml-[13px] flex w-[228px] shrink-0 flex-col">
                <div className="grid grid-cols-3 gap-x-1.5">
                  <Cell label="Persistent"><Toggle on label="Persistent" /></Cell>
                  <Cell label="Doppler"><Toggle on={false} label="Doppler" /></Cell>
                  <Cell label="Max Instances"><Field label="Max Instances" value="1" tone="bg-[#fbc646]" className="w-[72px]" /></Cell>
                  <Cell label="Pitch"><Field label="Pitch" value="0.00 st" centre mark="pitch" tone="bg-[#6c6c6c]" className="w-[72px]" /></Cell>
                  <Cell label="Doppler Scale"><Field label="Doppler Scale" value="100%" centre tone="bg-[#6c6c6c]" className="w-[72px]" /></Cell>
                  <Cell label="Stealing">
                    <span className="relative flex h-5 w-[72px] items-center rounded-[3px] border-2 border-[#222] bg-[#aeaeae]">
                      <select aria-label="Stealing" className="h-4 w-full appearance-none bg-transparent pl-3.5 text-[13px] leading-4 outline-none"><option>Oldest</option></select>
                      <Tri dir="down" className="pointer-events-none absolute right-0.5 size-2" />
                    </span>
                  </Cell>
                  <Cell label="Priority"><Field label="Priority" value="Highest" tone="bg-gradient-to-r from-[#aeaeae] from-50% to-[#fbc646] to-50%" className="w-[72px]" /></Cell>
                  <Cell label="Cooldown"><Field label="Cooldown" value="0.00 ms" className="w-[72px]" /></Cell>
                </div>
                <div className="text-center text-[13px] leading-5 text-[#ababab]">Min &amp; Max Distance</div>
                <svg viewBox="0 0 228 38" className="h-[38px] w-[228px]" fontSize="11">
                  <path d="M8 10H222M8 16V28M48 16V28M127 16V28M167 16V28M222 16V28" stroke="#2e2e2e" fill="none" />
                  <rect x="9" y="2" width="96" height="17" rx="3" fill="#6a6a6a" /><path d="M23 2V19M91 2V19" stroke="#111" strokeWidth="1.5" />
                  <path d="M14 6L19 10.5L14 15ZM100 6L95 10.5L100 15Z" fill="#111" />
                  <g fill="#4a4a4a"><text x="0" y="28">0</text><text x="40" y="28">5</text><text x="73" y="28">10</text><text x="110" y="28">100</text><text x="155" y="28">1k</text><text x="204" y="28">10k</text></g>
                  <g fill="#b0b0b0"><text x="15" y="28">1.00</text><text x="83" y="28">20.0</text></g>
                </svg>
                <div className="text-center text-[13px] leading-4 text-white">Event Macros</div>
              </div>
              <div className="mt-[5px] ml-[19px] flex h-[173px] w-[30px] shrink-0 flex-col border-l-2 border-[#4c4c4c] pl-[3px] text-white">
                <button aria-label="Expand automation"><Tri className="size-[11px]" /></button>
                <span className="mt-[30px] w-[14px] text-xs leading-[14px] whitespace-nowrap text-[#ababab] [writing-mode:vertical-rl]">Automation &amp; Modulation</span>
              </div>
            </div>
          </section>
        </div>
      </main>

      <footer className="flex h-6 shrink-0 items-center justify-end gap-[5px] pr-1 text-sm leading-4 text-[#a8abac]">
        <button className="mr-0.5 h-[18px] w-[90px] rounded-[3px] border border-[#a0a0a0]">Live Update Off</button>
        <label className="flex h-[18px] w-[158px] items-center rounded-[4px] border-2 border-[#787b7c]">
          <span className="border-r-2 border-[#787b7c] px-1">Platform</span>
          <select className="h-4 min-w-0 flex-1 appearance-none bg-transparent pl-1 text-white outline-none"><option>Desktop</option></select>
          <Tri dir="down" className="mr-1 size-[9px] text-white" />
        </label>
        <label className="flex h-[18px] w-[144px] items-center rounded-[4px] border-2 border-[#787b7c]">
          <span className="border-r-2 border-[#787b7c] px-1">Locale</span>
          <select className="h-4 min-w-0 flex-1 appearance-none bg-transparent outline-none"><option></option></select>
          <Tri dir="down" className="mr-1 size-[9px] text-white" />
        </label>
        <span className="h-[18px] w-[120px] rounded-[4px] border-2 border-[#787b7c]" />
      </footer>
    </div>
  );
}
